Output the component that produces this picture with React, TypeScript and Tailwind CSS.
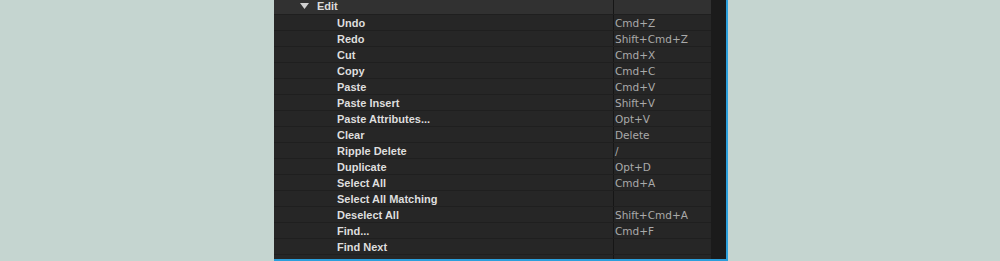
import React from "react";

const items: [string, string][] = [
  ["Undo", "Cmd+Z"],
  ["Redo", "Shift+Cmd+Z"],
  ["Cut", "Cmd+X"],
  ["Copy", "Cmd+C"],
  ["Paste", "Cmd+V"],
  ["Paste Insert", "Shift+V"],
  ["Paste Attributes...", "Opt+V"],
  ["Clear", "Delete"],
  ["Ripple Delete", "/"],
  ["Duplicate", "Opt+D"],
  ["Select All", "Cmd+A"],
  ["Select All Matching", ""],
  ["Deselect All", "Shift+Cmd+A"],
  ["Find...", "Cmd+F"],
  ["Find Next", ""],
];

const nameFont = { fontFamily: '"Liberation Sans", Arial, sans-serif' };
const scFont = { fontFamily: '"DejaVu Sans", "Liberation Sans", sans-serif' };

export default function App() {
  return (
    <div className="w-[1000px] h-[261px] overflow-hidden bg-[#c5d5d0]">
      <div className="ml-[274px] w-[454px] h-[261px] flex border-r-2 border-b-2 border-[#2b9fdc] bg-[#1b1b1b]">
        <div className="w-[437px] h-full overflow-hidden bg-[#262626]">
          <div className="flex h-[15px] bg-[#313131] border-b border-[#1f1f1f]">
            <div className="w-[340px] border-r border-[#161616] flex items-center">
              <svg width="9" height="6" viewBox="0 0 9 6" className="ml-[26px] mt-[-2px]">
                <path d="M0 0 L9 0 L4.5 6 Z" fill="#d0d0d0" />
              </svg>
              <span
                className="ml-[8px] text-[11px] leading-none font-bold text-[#dcdcdc] mt-[-2px]"
                style={nameFont}
              >
                Edit
              </span>
            </div>
            <div className="flex-1" />
          </div>
          {items.map(([name, sc]) => (
            <div key={name} className="flex h-[16px] border-b border-[#1f1f1f]">
              <div className="w-[340px] border-r border-[#161616] flex items-center">
                <span
                  className="ml-[63px] pt-[2px] text-[11px] leading-none font-bold text-[#dedede]"
                  style={nameFont}
                >
                  {name}
                </span>
              </div>
              <div className="flex-1 flex items-center">
                <span
                  className="ml-[1px] pt-[2px] text-[10.5px] leading-none text-[#aaaaaa]"
                  style={scFont}
                >
                  {sc}
                </span>
              </div>
            </div>
          ))}
          <div className="flex h-[16px] border-b border-[#1f1f1f]">
            <div className="w-[340px] border-r border-[#161616] flex items-center">
              <svg width="6" height="9" viewBox="0 0 6 9" className="ml-[28px] mt-[2px]">
                <path d="M0 0 L6 4.5 L0 9 Z" fill="#d0d0d0" />
              </svg>
              <span
                className="ml-[9px] pt-[2px] text-[11px] leading-none font-bold text-[#dcdcdc]"
                style={nameFont}
              >
                Labels
              </span>
            </div>
            <div className="flex-1" />
          </div>
        </div>
        <div className="flex-1" />
      </div>
    </div>
  );
}
